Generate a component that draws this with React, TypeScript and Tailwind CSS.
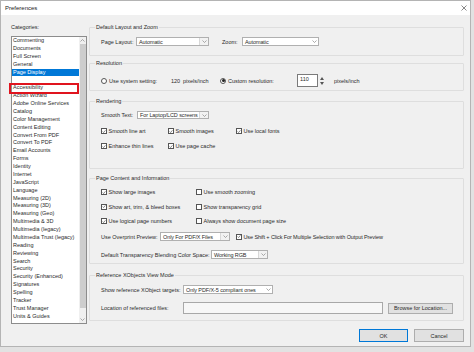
import React from "react";

const categories = [
  "Commenting",
  "Documents",
  "Full Screen",
  "General",
  "Page Display",
  "",
  "Accessibility",
  "Action Wizard",
  "Adobe Online Services",
  "Catalog",
  "Color Management",
  "Content Editing",
  "Convert From PDF",
  "Convert To PDF",
  "Email Accounts",
  "Forms",
  "Identity",
  "Internet",
  "JavaScript",
  "Language",
  "Measuring (2D)",
  "Measuring (3D)",
  "Measuring (Geo)",
  "Multimedia & 3D",
  "Multimedia (legacy)",
  "Multimedia Trust (legacy)",
  "Reading",
  "Reviewing",
  "Search",
  "Security",
  "Security (Enhanced)",
  "Signatures",
  "Spelling",
  "Tracker",
  "Trust Manager",
  "Units & Guides",
];

function Chevron({ up }: { up?: boolean }) {
  return (
    <svg width="5" height="3" viewBox="0 0 5 3" className="shrink-0">
      <path
        d={up ? "M0.5 2.5 L2.5 0.5 L4.5 2.5" : "M0.5 0.5 L2.5 2.5 L4.5 0.5"}
        stroke="#888"
        strokeWidth="0.7"
        fill="none"
      />
    </svg>
  );
}

function Select({ className, text, split }: { className: string; text: string; split?: boolean }) {
  return (
    <div className={`${className} bg-white border border-[#b0b0b0] flex items-center shrink-0`}>
      <span className="flex-1 pl-[2px] overflow-hidden whitespace-nowrap tracking-[-0.1px]">{text}</span>
      {split ? (
        <span className="w-[9px] h-full border-l border-[#d8d8d8] bg-[#f2f2f2] flex items-center justify-center">
          <Chevron />
        </span>
      ) : (
        <span className="w-[8px] flex items-center justify-center">
          <Chevron />
        </span>
      )}
    </div>
  );
}

function Check({ checked }: { checked?: boolean }) {
  return (
    <span className="w-[6px] h-[6px] border border-[#555] bg-white flex items-center justify-center shrink-0">
      {checked && (
        <svg width="5" height="5" viewBox="0 0 5 5">
          <path d="M0.8 2.5 L2 3.8 L4.3 1" stroke="#333" strokeWidth="0.7" fill="none" />
        </svg>
      )}
    </span>
  );
}

function Radio({ on }: { on?: boolean }) {
  return (
    <span className="w-[6px] h-[6px] rounded-full border border-[#555] bg-white flex items-center justify-center shrink-0">
      {on && <span className="w-[3px] h-[3px] rounded-full bg-[#222]" />}
    </span>
  );
}

function CheckItem({ label, checked, className }: { label: string; checked?: boolean; className: string }) {
  return (
    <div className={`${className} flex items-center gap-[1.5px] shrink-0`}>
      <Check checked={checked} />
      <span className="whitespace-nowrap">{label}</span>
    </div>
  );
}

function Group({ title, className, children }: { title: string; className: string; children: React.ReactNode }) {
  return (
    <fieldset className={`${className} w-[375px] border border-[#dedede] rounded-[1px] pl-[11px] shrink-0`}>
      <legend className="ml-[-6px] px-[1px] leading-[8px]">{title}</legend>
      {children}
    </fieldset>
  );
}

export default function App() {
  return (
    <div className="w-[474px] h-[352px] bg-[#e2e2e2] font-['Liberation_Sans',Arial,sans-serif] text-[5.5px] text-[#2a2a2a] leading-[8px]">
      <div className="w-[471px] h-[347px] bg-[#f0f0f0] border border-[#b4b4b4] flex flex-col">
        {/* title bar */}
        <div className="h-[14px] bg-white flex items-center justify-between pl-[4px] pr-[3px] shrink-0">
          <span className="text-[6px] text-[#222]">Preferences</span>
          <svg width="6" height="6" viewBox="0 0 6 6">
            <path d="M0.5 0.5 L5.5 5.5 M5.5 0.5 L0.5 5.5" stroke="#555" strokeWidth="0.7" />
          </svg>
        </div>

        <div className="flex flex-1">
          {/* categories */}
          <div className="w-[86px] pl-[10px] pt-[8px] flex flex-col shrink-0">
            <span>Categories:</span>
            <div className="relative mt-[5px] w-[76px] h-[288px] bg-white border border-[#8c8c8c] flex">
              <div className="flex-1 flex flex-col">
                {categories.map((c, i) => (
                  <div
                    key={i}
                    className={`h-[7.886px] leading-[7.886px] pl-[1px] whitespace-nowrap ${
                      c === "Page Display" ? "bg-[#0078d7] text-white" : ""
                    }`}
                  >
                    {c}
                  </div>
                ))}
              </div>
              <div className="w-[7px] bg-[#f0f0f0] flex flex-col items-center">
                <div className="h-[7px] flex items-center justify-center">
                  <Chevron up />
                </div>
                <div className="w-[6px] h-[264px] bg-[#cdcdcd]" />
                <div className="flex-1" />
                <div className="h-[8px] flex items-center justify-center">
                  <Chevron />
                </div>
              </div>
              <div className="absolute left-[-3px] top-[46px] w-[70px] h-[11px] border-2 border-[#e0141e]" />
            </div>
          </div>

          {/* settings */}
          <div className="flex-1 pl-[2px] pt-[8px] flex flex-col">
            <Group title="Default Layout and Zoom" className="h-[33px]">
              <div className="mt-[6px] h-[9px] flex items-center">
                <span className="w-[35px]">Page Layout:</span>
                <Select className="w-[73px] h-[9px]" text="Automatic" split />
                <span className="ml-[13px] w-[20px]">Zoom:</span>
                <Select className="w-[77px] h-[9px]" text="Automatic" />
              </div>
            </Group>

            <Group title="Resolution" className="mt-[3px] h-[32px]">
              <div className="mt-[7px] h-[13px] flex items-center">
                <Radio />
                <span className="ml-[2px] w-[62px]">Use system setting:</span>
                <span className="w-[12px]">120</span>
                <span className="w-[37px]">pixels/inch</span>
                <Radio on />
                <span className="ml-[2px] w-[69px]">Custom resolution:</span>
                <div className="w-[21px] h-[13px] bg-white border border-[#7a7a7a] pl-[2px] leading-[8px]">110</div>
                <div className="ml-[1px] w-[6px] h-[13px] flex flex-col justify-center items-center gap-[2px]">
                  <svg width="4" height="3" viewBox="0 0 4 3"><path d="M0 3 L2 0 L4 3 Z" fill="#555" /></svg>
                  <svg width="4" height="3" viewBox="0 0 4 3"><path d="M0 0 L2 3 L4 0 Z" fill="#555" /></svg>
                </div>
                <span className="ml-[9px]">pixels/inch</span>
              </div>
            </Group>

            <Group title="Rendering" className="mt-[6px] h-[72px]">
              <div className="mt-[6px] h-[8px] flex items-center">
                <span className="w-[36px]">Smooth Text:</span>
                <Select className="w-[72px] h-[8px]" text="For Laptop/LCD screens" split />
              </div>
              <div className="mt-[8px] h-[8px] flex items-center">
                <CheckItem className="w-[67px]" label="Smooth line art" checked />
                <CheckItem className="w-[68px]" label="Smooth images" checked />
                <CheckItem className="w-[80px]" label="Use local fonts" checked />
              </div>
              <div className="mt-[7px] h-[8px] flex items-center">
                <CheckItem className="w-[67px]" label="Enhance thin lines" checked />
                <CheckItem className="w-[68px]" label="Use page cache" checked />
              </div>
            </Group>

            <Group title="Page Content and Information" className="mt-[5px] h-[90px]">
              <div className="mt-[6px] h-[8px] flex items-center">
                <CheckItem className="w-[95px]" label="Show large images" checked />
                <CheckItem className="w-[100px]" label="Use smooth zooming" />
              </div>
              <div className="mt-[6.5px] h-[8px] flex items-center">
                <CheckItem className="w-[95px]" label="Show art, trim, & bleed boxes" checked />
                <CheckItem className="w-[100px]" label="Show transparency grid" />
              </div>
              <div className="mt-[6.5px] h-[8px] flex items-center">
                <CheckItem className="w-[95px]" label="Use logical page numbers" checked />
                <CheckItem className="w-[100px]" label="Always show document page size" />
              </div>
              <div className="mt-[7px] h-[9px] flex items-center">
                <span className="w-[59px]">Use Overprint Preview:</span>
                <Select className="w-[70px] h-[9px]" text="Only For PDF/X Files" split />
                <div className="ml-[6px] flex items-center gap-[1.5px] tracking-[-0.1px]">
                  <Check checked />
                  <span className="whitespace-nowrap">Use Shift + Click For Multiple Selection with Output Preview</span>
                </div>
              </div>
              <div className="mt-[9px] h-[9px] flex items-center">
                <span className="w-[110px]">Default Transparency Blending Color Space:</span>
                <Select className="w-[57px] h-[9px]" text="Working RGB" split />
              </div>
            </Group>

            <Group title="Reference XObjects View Mode" className="mt-[7px] h-[50px]">
              <div className="mt-[6px] h-[9px] flex items-center">
                <span className="w-[82px]">Show reference XObject targets:</span>
                <Select className="w-[90px] h-[9px]" text="Only PDF/X-5 compliant ones" />
              </div>
              <div className="mt-[8px] h-[12px] flex items-center">
                <span className="w-[82px]">Location of referenced files:</span>
                <div className="w-[200px] h-[12px] bg-[#f7f7f7] border border-[#a8a8a8]" />
                <button className="ml-[5px] w-[65px] h-[11px] bg-[#e1e1e1] border border-[#adadad] text-[5.5px] leading-[8px]">
                  Browse for Location...
                </button>
              </div>
            </Group>

            <div className="mt-[8px] w-[375px] flex justify-end gap-[6px]">
              <button className="w-[49px] h-[13px] bg-[#e1e1e1] border border-[#0078d7] text-[5.5px] leading-[8px]">OK</button>
              <button className="w-[50px] h-[13px] bg-[#e1e1e1] border border-[#adadad] text-[5.5px] leading-[8px]">Cancel</button>
            </div>
          </div>
        </div>
      </div>
    </div>
  );
}
